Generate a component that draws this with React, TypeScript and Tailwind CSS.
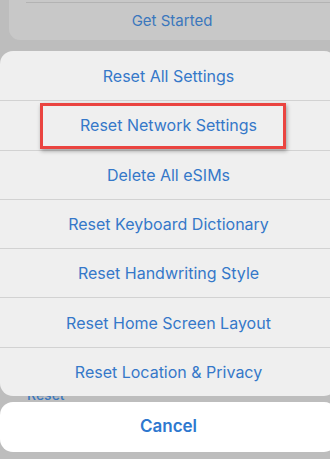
const rows = [
  "Reset All Settings",
  "Reset Network Settings",
  "Delete All eSIMs",
  "Reset Keyboard Dictionary",
  "Reset Handwriting Style",
  "Reset Home Screen Layout",
  "Reset Location & Privacy",
];

export default function App() {
  return (
    <div
      className="relative h-[459px] w-[330px] overflow-hidden bg-[#bdbdbd]"
      style={{ fontFamily: "Inter, 'Noto Sans', sans-serif" }}
    >
      {/* dimmed card behind the sheet */}
      <div className="ml-[9px] h-[40px] w-[340px] rounded-b-[11px] bg-[#c8c8c8] pt-[2px]">
        <div className="ml-[17px] border-t border-[#b3b3b3]" />
        <div className="flex h-[37px] items-center justify-center pr-[14px] text-[15px] text-[#3a77bd]">
          Get Started
        </div>
      </div>

      <div className="mt-[11px] w-[337px]">
        <div className="overflow-hidden rounded-[13px] bg-[#efefef]">
          {rows.map((label, i) => (
            <div
              key={label}
              className={
                "flex h-[49.3px] items-center justify-center text-[16px] text-[#3578c9] " +
                (i > 0 ? "border-t border-[#d2d2d2]" : "")
              }
            >
              {label}
            </div>
          ))}
        </div>

        <div className="h-[6px] overflow-hidden pl-[27px]">
          <div className="-mt-[11px] text-[14px] font-medium leading-[20px] text-[#3a77bd]">Reset</div>
        </div>

        <div className="flex h-[50px] items-center justify-center rounded-[13px] bg-white text-[17px] font-semibold text-[#2e78cf]">
          Cancel
        </div>
      </div>

      {/* highlight around Reset Network Settings */}
      <div className="absolute left-[40px] top-[103px] h-[46px] w-[246px] border-[3px] border-[#ea4440] shadow-[1px_2px_4px_rgba(0,0,0,0.35)]" />
    </div>
  );
}
